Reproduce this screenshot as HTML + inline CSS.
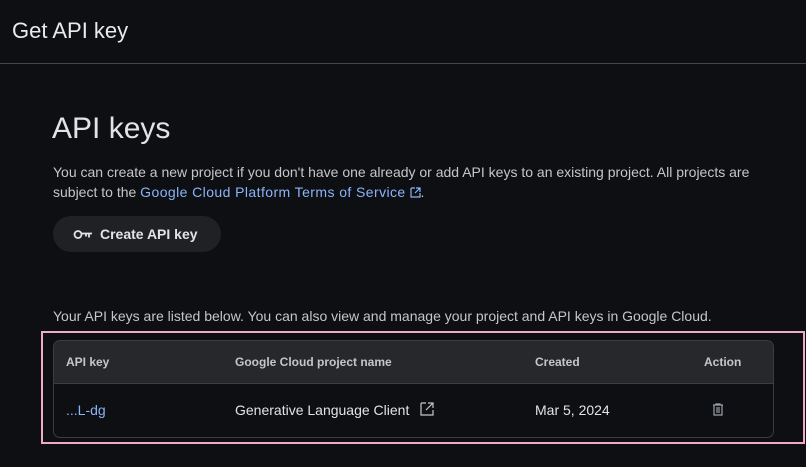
<!DOCTYPE html>
<html><head><style>
*{margin:0;padding:0;box-sizing:border-box}
body{width:806px;height:467px;background:#0e0f13;font-family:"Liberation Sans",sans-serif;color:#e3e3e3;position:relative;overflow:hidden}
.abs{position:absolute;white-space:nowrap}
.hdr{left:12px;top:18px;font-size:22px;color:#e8eaed}
.line{left:0;top:63px;width:806px;height:1px;background:#45464a}
.h1{left:52px;top:112px;font-size:30px;color:#e3e3e3}
.p{left:53px;font-size:14px;color:#c4c7c5}
a{color:#8ab4f8;text-decoration:none;letter-spacing:0.42px}
.btn{left:53px;top:216px;width:168px;height:36px;border-radius:18px;background:#202124;font-size:14px;font-weight:bold;color:#e3e3e3}
.pink{left:41px;top:331px;width:764px;height:113px;border:2px solid #f3a9c4}
.tbl{left:53px;top:340px;width:721px;height:98px;border:1px solid #3c3d41;border-radius:7px;overflow:hidden}
.th{position:absolute;left:0;top:0;width:100%;height:43px;background:#27282c;border-bottom:1px solid #3c3d41}
.c{position:absolute;font-size:12px;color:#c4c7c5;font-weight:bold}
.d{position:absolute;font-size:14px;color:#e3e3e3}
</style></head><body>
<div class="abs hdr">Get API key</div>
<div class="abs line"></div>
<div class="abs h1">API keys</div>
<div class="abs p" style="top:164px">You can create a new project if you don't have one already or add API keys to an existing project. All projects are</div>
<div class="abs p" style="top:184px">subject to the <a>Google Cloud Platform Terms of Service</a> <svg width="11" height="11" viewBox="0 0 11 11" style="vertical-align:-1px"><path d="M1 1h4M1 1v9h9V6M6 1h4v4M10 1L5 6" stroke="#8ab4f8" fill="none" stroke-width="1.2"/></svg>.</div>
<div class="abs btn"><svg class="abs" style="left:20px;top:13px" width="20" height="11" viewBox="0 0 20 11"><circle cx="5" cy="5.5" r="3.5" stroke="#e3e3e3" stroke-width="1.8" fill="none"/><path d="M8.5 4.5H19M16 4.5v4M13 4.5v3" stroke="#e3e3e3" stroke-width="1.8" fill="none"/></svg><span class="abs" style="left:47px;top:10px">Create API key</span></div>
<div class="abs p" style="top:308px">Your API keys are listed below. You can also view and manage your project and API keys in Google Cloud.</div>
<div class="abs pink"></div>
<div class="abs tbl">
<div class="th"></div>
<div class="c" style="left:12px;top:14px">API key</div>
<div class="c" style="left:181px;top:14px">Google Cloud project name</div>
<div class="c" style="left:481px;top:14px">Created</div>
<div class="c" style="left:650px;top:14px">Action</div>
<div class="d" style="left:12px;top:61px;color:#8ab4f8">...L-dg</div>
<div class="d" style="left:181px;top:61px">Generative Language Client</div>
<svg style="position:absolute;left:366px;top:61px" width="14" height="14" viewBox="0 0 14 14"><path d="M1 1h5M1 1v12h12V8M8 1h5v5M13 1L6 8" stroke="#c4c7c5" fill="none" stroke-width="1.2"/></svg>
<div class="d" style="left:481px;top:61px">Mar 5, 2024</div>
<svg style="position:absolute;left:658px;top:62px" width="12" height="13" viewBox="0 0 12 13"><path d="M1 2h10M4 2V1h4v1M2 2v10h8V2M5 4v6M7 4v6" stroke="#9aa0a6" fill="none" stroke-width="1.2"/></svg>
</div>
</body></html>
